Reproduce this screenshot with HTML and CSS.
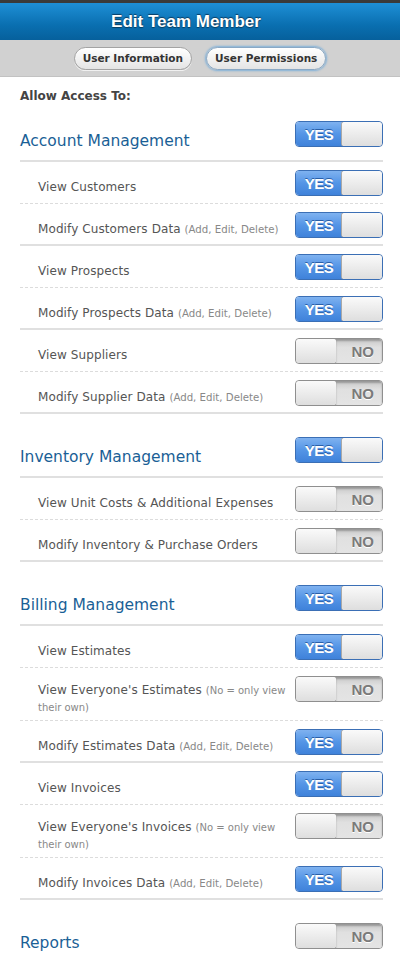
FILE: index.html
```html
<!DOCTYPE html>
<html lang="en">

<head>
    <meta charset="UTF-8">
    <meta name="viewport" content="width=device-width, initial-scale=1.0">
    <title>Edit Team Member</title>

    <link rel="stylesheet" href="styles.css">
</head>

<body>
    <header class="top-bar">
        <h1>Edit Team Member</h1>
    </header>

    <nav class="tabs">
        <button class="tab">User Information</button>
        <button class="tab active">User Permissions</button>
    </nav>

    <main class="perms">
        <p class="intro">Allow Access To:</p>

        <div class="section">
            <h2>Account Management</h2>
            <span class="switch on"><b>YES</b><i></i></span>
        </div>
        <div class="row">
            <span class="label">View Customers</span>
            <span class="switch on"><b>YES</b><i></i></span>
        </div>
        <div class="row end">
            <span class="label">Modify Customers Data <small>(Add, Edit, Delete)</small></span>
            <span class="switch on"><b>YES</b><i></i></span>
        </div>
        <div class="row">
            <span class="label">View Prospects</span>
            <span class="switch on"><b>YES</b><i></i></span>
        </div>
        <div class="row end">
            <span class="label">Modify Prospects Data <small>(Add, Edit, Delete)</small></span>
            <span class="switch on"><b>YES</b><i></i></span>
        </div>
        <div class="row">
            <span class="label">View Suppliers</span>
            <span class="switch off"><i></i><b>NO</b></span>
        </div>
        <div class="row end">
            <span class="label">Modify Supplier Data <small>(Add, Edit, Delete)</small></span>
            <span class="switch off"><i></i><b>NO</b></span>
        </div>

        <div class="section">
            <h2>Inventory Management</h2>
            <span class="switch on"><b>YES</b><i></i></span>
        </div>
        <div class="row">
            <span class="label">View Unit Costs &amp; Additional Expenses</span>
            <span class="switch off"><i></i><b>NO</b></span>
        </div>
        <div class="row end">
            <span class="label">Modify Inventory &amp; Purchase Orders</span>
            <span class="switch off"><i></i><b>NO</b></span>
        </div>

        <div class="section">
            <h2>Billing Management</h2>
            <span class="switch on"><b>YES</b><i></i></span>
        </div>
        <div class="row">
            <span class="label">View Estimates</span>
            <span class="switch on"><b>YES</b><i></i></span>
        </div>
        <div class="row tall">
            <span class="label">View Everyone's Estimates <small>(No = only view<br>their own)</small></span>
            <span class="switch off"><i></i><b>NO</b></span>
        </div>
        <div class="row end">
            <span class="label">Modify Estimates Data <small>(Add, Edit, Delete)</small></span>
            <span class="switch on"><b>YES</b><i></i></span>
        </div>
        <div class="row">
            <span class="label">View Invoices</span>
            <span class="switch on"><b>YES</b><i></i></span>
        </div>
        <div class="row tall">
            <span class="label">View Everyone's Invoices <small>(No = only view<br>their own)</small></span>
            <span class="switch off"><i></i><b>NO</b></span>
        </div>
        <div class="row end">
            <span class="label">Modify Invoices Data <small>(Add, Edit, Delete)</small></span>
            <span class="switch on"><b>YES</b><i></i></span>
        </div>

        <div class="section last">
            <h2>Reports</h2>
            <span class="switch off"><i></i><b>NO</b></span>
        </div>
    </main>
</body>

</html>
```

FILE: styles.css
```css
body {
    margin: 0;
    font-family: "DejaVu Sans", Verdana, sans-serif;
    background: #fff;
    color: #555;
}

.top-bar {
    height: 37px;
    border-top: 3px solid #3a3a3a;
    background: linear-gradient(#1e8fd6, #0a6fb0 60%, #06609c);
    display: flex;
    align-items: center;
    justify-content: center;
    padding-right: 28px;
}

.top-bar h1 {
    margin: 0;
    font-family: "Liberation Sans", Arial, sans-serif;
    font-size: 17px;
    font-weight: bold;
    color: #fff;
    text-shadow: 0 -1px 1px #0b3d63, 0 1px 1px rgba(0, 0, 0, 0.45);
}

.tabs {
    height: 36px;
    background: #d1d1d1;
    border-bottom: 1px solid #c2c2c2;
    display: flex;
    justify-content: center;
    align-items: center;
    gap: 14px;
}

.tab {
    all: unset;
    height: 21px;
    padding: 0 8px;
    border: 1px solid #a3a3a3;
    border-radius: 12px;
    background: linear-gradient(#ffffff, #f2f2f2 50%, #e4e4e4);
    font-family: "DejaVu Sans", Verdana, sans-serif;
    font-size: 10.5px;
    font-weight: bold;
    color: #333;
    line-height: 21px;
    box-shadow: 0 1px 0 rgba(255, 255, 255, 0.7);
}

.tab.active {
    border-color: #8aa8c4;
    box-shadow: 0 0 2px 1px rgba(110, 170, 220, 0.8);
}

.perms {
    padding: 0 17px 12px 20px;
}

.intro {
    margin: 0;
    height: 33px;
    line-height: 38px;
    font-size: 12px;
    font-weight: bold;
    color: #444;
}

.section {
    display: flex;
    justify-content: space-between;
    align-items: flex-start;
    height: 50px;
    border-bottom: 2px solid #e0e0e0;
}

.row.end + .section {
    margin-top: 12px;
}

.section.last {
    border-bottom: 0;
}

.section h2 {
    margin: 22px 0 0;
    font-size: 15.5px;
    font-weight: normal;
    color: #1a5f96;
}

.section .switch {
    margin-top: 11px;
}

.row {
    display: flex;
    justify-content: space-between;
    align-items: flex-start;
    gap: 4px;
    padding: 8px 0 7px;
    border-bottom: 1px dashed #dcdcdc;
}

.row.end {
    border-bottom: 2px solid #e0e0e0;
    padding-bottom: 6px;
}

.row.tall {
    padding-bottom: 4px;
}

.label {
    padding: 9px 0 0 18px;
    font-size: 12px;
    letter-spacing: 0.1px;
    line-height: 16px;
    white-space: nowrap;
    color: #555;
}

.row.tall .label {
    padding-top: 6px;
}

.label small {
    font-size: 10.2px;
    letter-spacing: 0;
    line-height: 16px;
    color: #888;
}

.row.tall small {
    font-size: 10px;
}

.switch {
    flex: none;
    display: flex;
    width: 86px;
    height: 24px;
    border: 1px solid #8f8f8f;
    border-radius: 4px;
    overflow: hidden;
    font-family: "Liberation Sans", Arial, sans-serif;
    font-size: 15px;
    font-weight: bold;
}

.switch b {
    display: flex;
    align-items: center;
    justify-content: center;
    width: 46px;
}

.switch i {
    flex: 1;
    background: linear-gradient(#fafafa, #ececec 50%, #dedede);
    border-radius: 3px;
    box-shadow: 0 0 0 1px #a8a8a8;
}

.switch.on {
    border-color: #3b6fb5;
}

.switch.on b {
    color: #fff;
    background: linear-gradient(#7fb2f0, #5495e6 50%, #3f82da);
    text-shadow: 0 -1px 0 #2a5fa8;
    letter-spacing: -0.5px;
}

.switch.off b {
    justify-content: flex-end;
    padding-right: 8px;
    width: 38px;
    color: #7a7a7a;
    background: linear-gradient(#c8c8c8, #e0e0e0 35%, #e4e4e4);
    box-shadow: inset 0 2px 2px rgba(0, 0, 0, 0.25);
    text-shadow: 0 1px 0 #fff;
}
```
